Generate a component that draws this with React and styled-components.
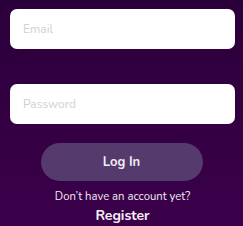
import React from 'react';
import styled, { createGlobalStyle } from 'styled-components';

const Global = createGlobalStyle`
  html, body {
    margin: 0;
    padding: 0;
    height: 100%;
  }
  body {
    background: linear-gradient(180deg, #2a003a 0%, #330042 50%, #3b004b 100%);
    font-family: "Nunito", Lato, "Noto Sans", sans-serif;
  }
`;

const Form = styled.form`
  display: flex;
  flex-direction: column;
  padding: 9px 8px 0 10px;
`;

const Input = styled.input`
  box-sizing: border-box;
  height: 40px;
  width: 100%;
  border: none;
  border-radius: 7px;
  background: #ffffff;
  padding: 0 13px;
  font-family: inherit;
  font-size: 12px;
  color: #333;
  margin-bottom: ${(p) => p.$gap}px;
  outline: none;
  &::placeholder {
    color: #cfcfd2;
  }
`;

const Button = styled.button`
  align-self: center;
  width: 162px;
  height: 38px;
  margin-left: -2px;
  border: none;
  border-radius: 19px;
  background: #553a6d;
  color: #f2ecf4;
  font-family: inherit;
  font-weight: 700;
  font-size: 13px;
  cursor: pointer;
`;

const Prompt = styled.p`
  margin: 9px 0 0;
  text-align: center;
  color: #f1e9f3;
  font-size: 11.3px;
  line-height: 14px;
`;

const RegisterLink = styled.a`
  display: block;
  text-align: center;
  color: #f6f0f8;
  font-weight: 700;
  font-size: 14px;
  line-height: 18px;
  margin-top: 3px;
  text-decoration: none;
`;

export default () => {
  return (
    <>
      <Global />
      <Form onSubmit={(e) => e.preventDefault()}>
        <Input type="email" placeholder="Email" $gap={35} />
        <Input type="password" placeholder="Password" $gap={19} />
        <Button type="submit">Log In</Button>
        <Prompt>Don’t have an account yet?</Prompt>
        <RegisterLink href="#">Register</RegisterLink>
      </Form>
    </>
  );
};
